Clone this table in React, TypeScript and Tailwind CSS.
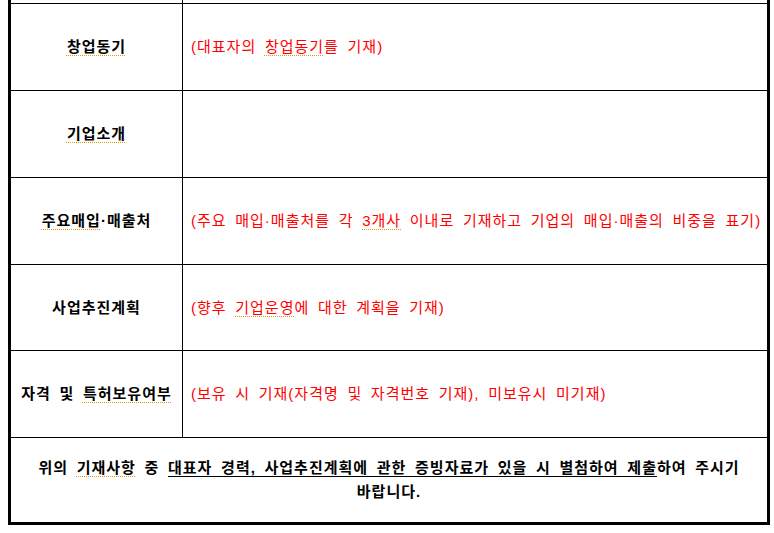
import React from 'react';

const font = "font-['Liberation_Sans','Noto_Sans_CJK_KR',sans-serif]";

// spell-check style dotted underline
const Sp: React.FC<{ children: React.ReactNode }> = ({ children }) => (
  <span className="underline decoration-dotted decoration-[#e8960c] decoration-[1px] underline-offset-[3px]">{children}</span>
);

interface RowProps {
  label: React.ReactNode;
  content?: React.ReactNode;
  h: string;
}

const Row: React.FC<RowProps> = ({ label, content, h }) => (
  <div className={`grid grid-cols-[172px_1fr] border-t border-black ${h}`}>
    <div className="flex items-center justify-center border-r border-black font-bold text-black">{label}</div>
    <div className="flex items-center pl-[8px] text-[#ff0000]">{content}</div>
  </div>
);

export default function App() {
  return (
    <div className={`w-[774px] h-[533px] bg-white ${font} text-[15px] leading-[24px] tracking-[1px] [word-spacing:3.5px]`}>
      <div className="ml-[8px] w-[762px] border-x-[3px] border-b-[3px] border-black">
        <div className="grid grid-cols-[172px_1fr] h-[3px]">
          <div className="border-r border-black" />
          <div />
        </div>
        <Row h="h-[87px]" label={<Sp>창업동기</Sp>} content={<span>(대표자의 <Sp>창업동기</Sp>를 기재)</span>} />
        <Row h="h-[87px]" label={<Sp>기업소개</Sp>} />
        <Row
          h="h-[87px]"
          label={<span><Sp>주요매입</Sp>·매출처</span>}
          content={<span>(주요 매입·매출처를 각 <Sp>3개사</Sp> 이내로 기재하고 기업의 매입·매출의 비중을 표기)</span>}
        />
        <Row h="h-[86px]" label="사업추진계획" content={<span>(향후 <Sp>기업운영</Sp>에 대한 계획을 기재)</span>} />
        <Row
          h="h-[87px]"
          label={<span>자격 및 <Sp>특허보유여부</Sp></span>}
          content={<span>(보유 시 기재(자격명 및 자격번호 기재), 미보유시 미기재)</span>}
        />
        <div className="flex h-[85px] items-center justify-center border-t border-black text-center font-bold text-black">
          <p>
            위의 <Sp>기재사항</Sp> 중{' '}
            <span className="underline decoration-black decoration-[1px] underline-offset-[3px]">
              대표자 경력, 사업추진계획에 관한 증빙자료가 있을 시 별첨하여 제출
            </span>
            하여 주시기
            <br />
            바랍니다.
          </p>
        </div>
      </div>
    </div>
  );
}
